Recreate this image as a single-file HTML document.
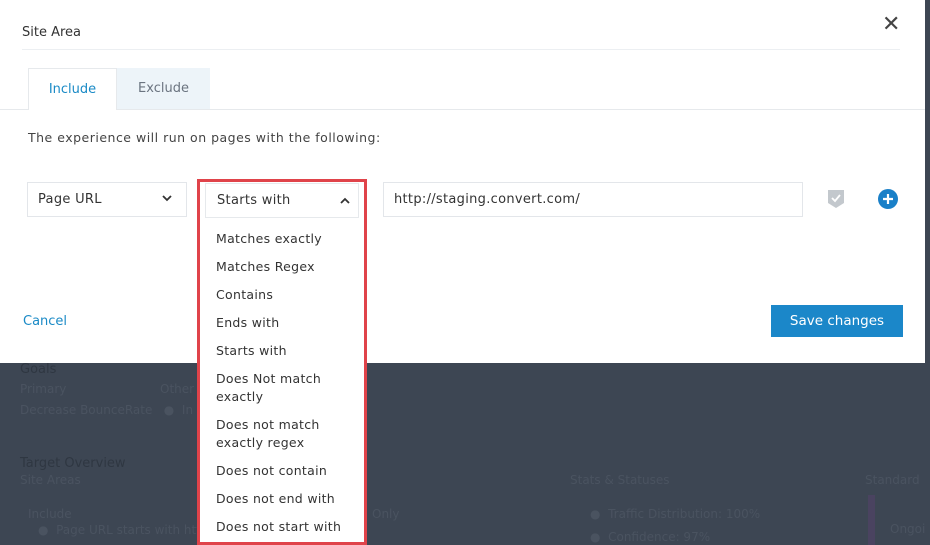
<!DOCTYPE html>
<html><head><meta charset="utf-8"><style>
*{margin:0;padding:0;box-sizing:border-box}
body{width:930px;height:545px;overflow:hidden;background:#3d4653;font-family:"DejaVu Sans","Liberation Sans",sans-serif;position:relative;color:#333}
.a{position:absolute}
.bg{color:#2f3742;font-size:12px}
.bg2{color:#4a5360;font-size:12px}
.modal{left:0;top:0;width:925px;height:363px;background:#fff}
.sel{border:1px solid #e3e6ea;background:#fff;font-size:13px;color:#333;line-height:33px;padding-left:10px;letter-spacing:0.3px}
.item{position:absolute;left:16px;font-size:12.5px;color:#333;line-height:18px;letter-spacing:0.3px}
</style></head><body>
<div class="a bg" style="left:20px;top:362px;font-size:13px">Goals</div>
<div class="a bg2" style="left:20px;top:382px">Primary</div>
<div class="a bg2" style="left:160px;top:382px">Other</div>
<div class="a bg2" style="left:20px;top:403px">Decrease BounceRate &nbsp; ● &nbsp;In</div>
<div class="a bg" style="left:20px;top:456px;font-size:13px">Target Overview</div>
<div class="a bg2" style="left:20px;top:473px">Site Areas</div>
<div class="a bg2" style="left:570px;top:473px">Stats &amp; Statuses</div>
<div class="a bg2" style="left:865px;top:473px">Standard</div>
<div class="a bg2" style="left:28px;top:507px">Include</div>
<div class="a bg2" style="left:38px;top:523px">● &nbsp;Page URL starts with htt</div>
<div class="a bg2" style="left:372px;top:507px">Only</div>
<div class="a bg2" style="left:590px;top:507px">● &nbsp;Traffic Distribution: 100%</div>
<div class="a bg2" style="left:590px;top:530px">● &nbsp;Confidence: 97%</div>
<div class="a" style="left:868px;top:495px;width:7px;height:50px;background:#4a4360"></div>
<div class="a bg2" style="left:890px;top:522px">Ongoi</div>

<div class="a modal">
  <div class="a" style="left:22px;top:25px;font-size:13px;color:#333">Site Area</div>
  <div class="a" style="left:882px;top:12px;font-size:22px;color:#444;font-family:'DejaVu Sans'">✕</div>
  <div class="a" style="left:22px;top:49px;width:878px;height:1px;background:#eceff2"></div>
  <div class="a" style="left:0;top:109px;width:925px;height:1px;background:#e6e9ec"></div>
  <div class="a" style="left:28px;top:68px;width:89px;height:42px;background:#fff;border:1px solid #e6e9ec;border-bottom:none;color:#1a8ac6;font-size:13px;text-align:center;line-height:42px">Include</div>
  <div class="a" style="left:117px;top:68px;width:93px;height:41px;background:#edf4f9;color:#6b7480;font-size:13px;text-align:center;line-height:42px">Exclude</div>
  <div class="a" style="left:28px;top:130px;font-size:12.5px;color:#444;letter-spacing:0.5px">The experience will run on pages with the following:</div>
  <div class="a sel" style="left:27px;top:182px;width:160px;height:35px">Page URL</div>
  <svg class="a" style="left:162px;top:195px" width="10" height="7"><path d="M1 1 L5 5 L9 1" stroke="#333" stroke-width="1.8" fill="none"/></svg>
  <div class="a sel" style="left:383px;top:182px;width:420px;height:35px">http://staging.convert.com/</div>
  <svg class="a" style="left:827px;top:189px" width="18" height="20"><path d="M1 1 H17 V14 L9 19 L1 14 Z" fill="#c3c8cd"/><path d="M5 9 L8 12 L13 6" stroke="#fff" stroke-width="1.8" fill="none"/></svg>
  <svg class="a" style="left:877px;top:188px" width="22" height="22"><circle cx="11" cy="11" r="10" fill="#1a80c8"/><path d="M11 6 V16 M6 11 H16" stroke="#fff" stroke-width="2.2"/></svg>
  <div class="a" style="left:23px;top:314px;font-size:13px;color:#1a8ac6">Cancel</div>
  <div class="a" style="left:771px;top:305px;width:132px;height:32px;background:#1b87c9;color:#fff;font-size:13.5px;text-align:center;line-height:32px">Save changes</div>
</div>

<div class="a" style="left:197px;top:179px;width:170px;height:366px;border:3px solid #e0434a;background:#fff">
  <div class="a sel" style="left:5px;top:1px;width:154px;height:35px;border-color:#e6e9ec;padding-left:11px">Starts with</div>
  <svg class="a" style="left:140px;top:15px" width="10" height="7"><path d="M1 6 L5 2 L9 6" stroke="#333" stroke-width="1.8" fill="none"/></svg>
  <div class="item" style="top:48px">Matches exactly</div>
  <div class="item" style="top:76px">Matches Regex</div>
  <div class="item" style="top:104px">Contains</div>
  <div class="item" style="top:132px">Ends with</div>
  <div class="item" style="top:160px">Starts with</div>
  <div class="item" style="top:188px">Does Not match<br>exactly</div>
  <div class="item" style="top:234px">Does not match<br>exactly regex</div>
  <div class="item" style="top:280px">Does not contain</div>
  <div class="item" style="top:308px">Does not end with</div>
  <div class="item" style="top:336px">Does not start with</div>
</div>
</body></html>
